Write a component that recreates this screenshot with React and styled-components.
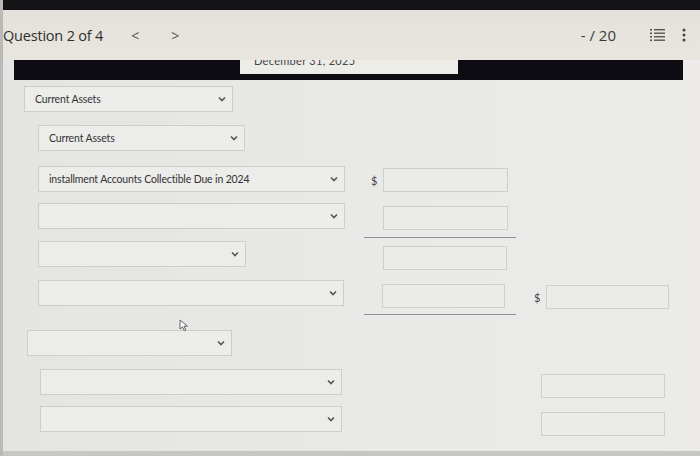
import React from "react";
import styled, { createGlobalStyle } from "styled-components";

const GlobalStyle = createGlobalStyle`
  html, body {
    margin: 0;
    padding: 0;
    background: #e6e6e4;
  }
  #root {
    width: 700px;
    height: 456px;
    overflow: hidden;
  }
`;

const Screen = styled.div`
  position: relative;
  width: 700px;
  height: 456px;
  overflow: hidden;
  background: linear-gradient(90deg, #e4e4e2 0%, #e9e9e7 55%, #ecebe9 100%);
  border-left: 3px solid #b9b9b7;
  box-sizing: border-box;
  display: flex;
  flex-direction: column;
`;

const TopEdge = styled.div`
  height: 10px;
  background: #141416;
  margin-left: -3px;
`;

const Header = styled.header`
  height: 50px;
  margin-left: -3px;
  background: linear-gradient(180deg, #e3e1d9 0%, #e8e6de 100%);
  display: flex;
  align-items: center;
  padding: 0 14px 0 3px;
  font-family: "Open Sans", "Liberation Sans", sans-serif;
  color: #2f2f2f;
`;

const Title = styled.span`
  font-size: 14.5px;
  letter-spacing: -0.2px;
`;

const NavArrow = styled.span`
  font-size: 14px;
  color: #555;
  margin-left: ${(p) => p.$gap}px;
`;

const Spacer = styled.div`
  flex: 1;
`;

const Score = styled.span`
  font-size: 15px;
  color: #3a3a3a;
  margin-right: 34px;
`;

const IconSlot = styled.span`
  display: inline-flex;
  align-items: center;
  margin-right: ${(p) => p.$mr || 0}px;
`;

const Band = styled.div`
  height: 20px;
  display: flex;
  margin: 0 17px 0 11px;
  background: #0d0c12;
`;

const DateTab = styled.div`
  margin-left: 226px;
  width: 218px;
  height: 14px;
  background: #ecece8;
  overflow: hidden;
  font-family: "Lato", "Liberation Sans", sans-serif;
  font-size: 11px;
  color: #444;
  padding-left: 14px;
  box-sizing: border-box;
  line-height: 1;
`;

const DateText = styled.div`
  margin-top: -5px;
  letter-spacing: 0.3px;
`;

const Body = styled.div`
  flex: 1;
  font-family: "Lato", "Liberation Sans", sans-serif;
  border-bottom: 5px solid #c6c6c4;
`;

const Row = styled.div`
  display: grid;
  grid-template-columns: 361px 152px 1fr;
  align-items: start;
  margin-top: ${(p) => p.$mt}px;
`;

const SelectBox = styled.div`
  margin-left: ${(p) => p.$left}px;
  width: ${(p) => p.$width}px;
  height: 26px;
  box-sizing: border-box;
  border: 1px solid #cdcdcb;
  background: #ececea;
  display: flex;
  align-items: center;
  padding: 0 6px 0 10px;
  font-size: 10.5px;
  color: #333;
  letter-spacing: -0.15px;
`;

const SelectText = styled.span`
  flex: 1;
  white-space: nowrap;
`;

const AmountCell = styled.div`
  display: flex;
  align-items: center;
  padding-left: ${(p) => p.$left}px;
  margin-top: ${(p) => p.$top}px;
  padding-bottom: ${(p) => (p.$rule ? p.$rule : 0)}px;
  border-bottom: ${(p) => (p.$rule ? "1.5px solid #8e9094" : "none")};
  width: ${(p) => (p.$rule ? "152px" : "auto")};
  box-sizing: border-box;
`;

const Dollar = styled.span`
  width: 9px;
  margin-right: 3px;
  font-size: 11px;
  color: #444;
`;

const AmountInput = styled.div`
  width: ${(p) => p.$width}px;
  height: 24px;
  box-sizing: border-box;
  border: 1px solid #cfcfcd;
  background: #ebebe9;
`;

const Pointer = styled.svg`
  position: absolute;
  left: 176px;
  top: 319px;
`;

function Chevron() {
  return (
    <svg width="8" height="6" viewBox="0 0 8 6">
      <path d="M1 1.5 L4 4.5 L7 1.5" fill="none" stroke="#555" strokeWidth="1.6" />
    </svg>
  );
}

function ListIcon() {
  return (
    <svg width="16" height="14" viewBox="0 0 16 14">
      <g fill="#555">
        <rect x="0" y="1" width="2" height="1.6" />
        <rect x="0" y="4.5" width="2" height="1.6" />
        <rect x="0" y="8" width="2" height="1.6" />
        <rect x="0" y="11.5" width="2" height="1.6" />
        <rect x="4" y="1" width="11" height="1.4" />
        <rect x="4" y="4.5" width="11" height="1.4" />
        <rect x="4" y="8" width="11" height="1.4" />
        <rect x="4" y="11.5" width="11" height="1.4" />
      </g>
    </svg>
  );
}

function Kebab() {
  return (
    <svg width="4" height="14" viewBox="0 0 4 14">
      <g fill="#444">
        <circle cx="2" cy="2" r="1.5" />
        <circle cx="2" cy="7" r="1.5" />
        <circle cx="2" cy="12" r="1.5" />
      </g>
    </svg>
  );
}

function Select({ left, width, text }) {
  return (
    <SelectBox $left={left} $width={width}>
      <SelectText>{text}</SelectText>
      <Chevron />
    </SelectBox>
  );
}

function Amount({ left, top, width, dollar, rule }) {
  return (
    <AmountCell $left={left} $top={top} $rule={rule}>
      {dollar && <Dollar>$</Dollar>}
      <AmountInput $width={width} />
    </AmountCell>
  );
}

const rows = [
  { mt: 6, sel: { left: 21, width: 209, text: "Current Assets" } },
  { mt: 13, sel: { left: 35, width: 207, text: "Current Assets" } },
  {
    mt: 15,
    sel: { left: 35, width: 307, text: "installment Accounts Collectible Due in 2024" },
    mid: { left: 7, top: 2, width: 125, dollar: true },
  },
  {
    mt: 11,
    sel: { left: 35, width: 307 },
    mid: { left: 19, top: 3, width: 125, rule: 7 },
  },
  {
    mt: 3,
    sel: { left: 35, width: 208 },
    mid: { left: 19, top: 5, width: 124 },
  },
  {
    mt: 10,
    sel: { left: 35, width: 306 },
    mid: { left: 18, top: 4, width: 123, rule: 6 },
    right: { left: 18, top: 5, width: 123, dollar: true },
  },
  { mt: 15, sel: { left: 24, width: 205 } },
  {
    mt: 13,
    sel: { left: 37, width: 302 },
    right: { left: 25, top: 5, width: 124 },
  },
  {
    mt: 8,
    sel: { left: 37, width: 302 },
    right: { left: 25, top: 6, width: 124 },
  },
];

export default function App() {
  return (
    <>
      <GlobalStyle />
      <Screen>
        <TopEdge />
        <Header>
          <Title>Question 2 of 4</Title>
          <NavArrow $gap={28}>&lt;</NavArrow>
          <NavArrow $gap={32}>&gt;</NavArrow>
          <Spacer />
          <Score>- / 20</Score>
          <IconSlot $mr={16}>
            <ListIcon />
          </IconSlot>
          <IconSlot>
            <Kebab />
          </IconSlot>
        </Header>
        <Band>
          <DateTab>
            <DateText>December 31, 2025</DateText>
          </DateTab>
        </Band>
        <Body>
          {rows.map((r, i) => (
            <Row key={i} $mt={r.mt}>
              <Select {...r.sel} />
              <div>{r.mid && <Amount {...r.mid} />}</div>
              <div>{r.right && <Amount {...r.right} />}</div>
            </Row>
          ))}
        </Body>
        <Pointer width="10" height="13" viewBox="0 0 10 13">
          <path d="M1 1 L1 10 L3.5 7.8 L5.3 11.8 L6.8 11.1 L5 7.2 L8.4 7.2 Z" fill="#fff" stroke="#555" strokeWidth="0.9" />
        </Pointer>
      </Screen>
    </>
  );
}
